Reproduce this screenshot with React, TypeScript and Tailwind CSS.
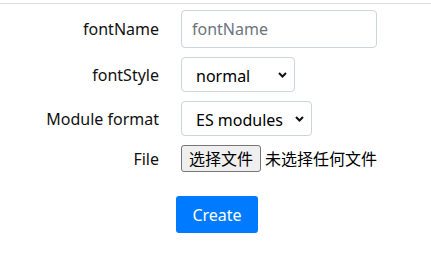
import React from "react";

const font = { fontFamily: '"Noto Sans", "Noto Sans CJK SC", sans-serif' };

function Chevron() {
  return (
    <svg className="pointer-events-none absolute right-[8px] top-1/2 -translate-y-1/2" width="9" height="6" viewBox="0 0 9 6">
      <path d="M1 1 L4.5 4.5 L8 1" fill="none" stroke="#111" strokeWidth="2" />
    </svg>
  );
}

export default function App() {
  return (
    <div className="min-h-[255px] bg-white pt-[3px] text-[16px] text-[#111]" style={font}>
      <div className="border-t border-[#dedede]" />
      <form className="pt-[6px]">
        <div className="grid grid-cols-[159px_auto] items-center gap-x-[22px] gap-y-[9px]">
          <label className="text-right">fontName</label>
          <input
            placeholder="fontName"
            className="h-[38px] w-[196px] rounded-[4px] border border-[#ced4da] px-[10px] text-[16px] text-[#495057] outline-none placeholder:text-[#6c757d]"
          />
          <label className="text-right">fontStyle</label>
          <div className="relative w-[114px]">
            <select className="h-[35px] w-full appearance-none rounded-[4px] border border-[#ced4da] bg-white pl-[14px] pt-[3px] text-[16px] text-black outline-none">
              <option>normal</option>
            </select>
            <Chevron />
          </div>
          <label className="text-right">Module format</label>
          <div className="relative w-[131px]">
            <select className="h-[35px] w-full appearance-none rounded-[4px] border border-[#ced4da] bg-white pl-[14px] pt-[3px] text-[16px] text-black outline-none">
              <option>ES modules</option>
            </select>
            <Chevron />
          </div>
          <label className="text-right">File</label>
          <div className="flex items-center gap-[4px]">
            <button type="button" className="h-[27px] w-[80px] rounded-[3px] border border-[#767676] bg-[#efefef] text-[16px] leading-none text-black">
              选择文件
            </button>
            <span className="text-black">未选择任何文件</span>
          </div>
        </div>
        <div className="flex justify-center pl-[3px] pt-[24px]">
          <button type="button" className="h-[37px] w-[82px] rounded-[3px] bg-[#007bff] text-[16px] text-white">
            Create
          </button>
        </div>
      </form>
    </div>
  );
}
